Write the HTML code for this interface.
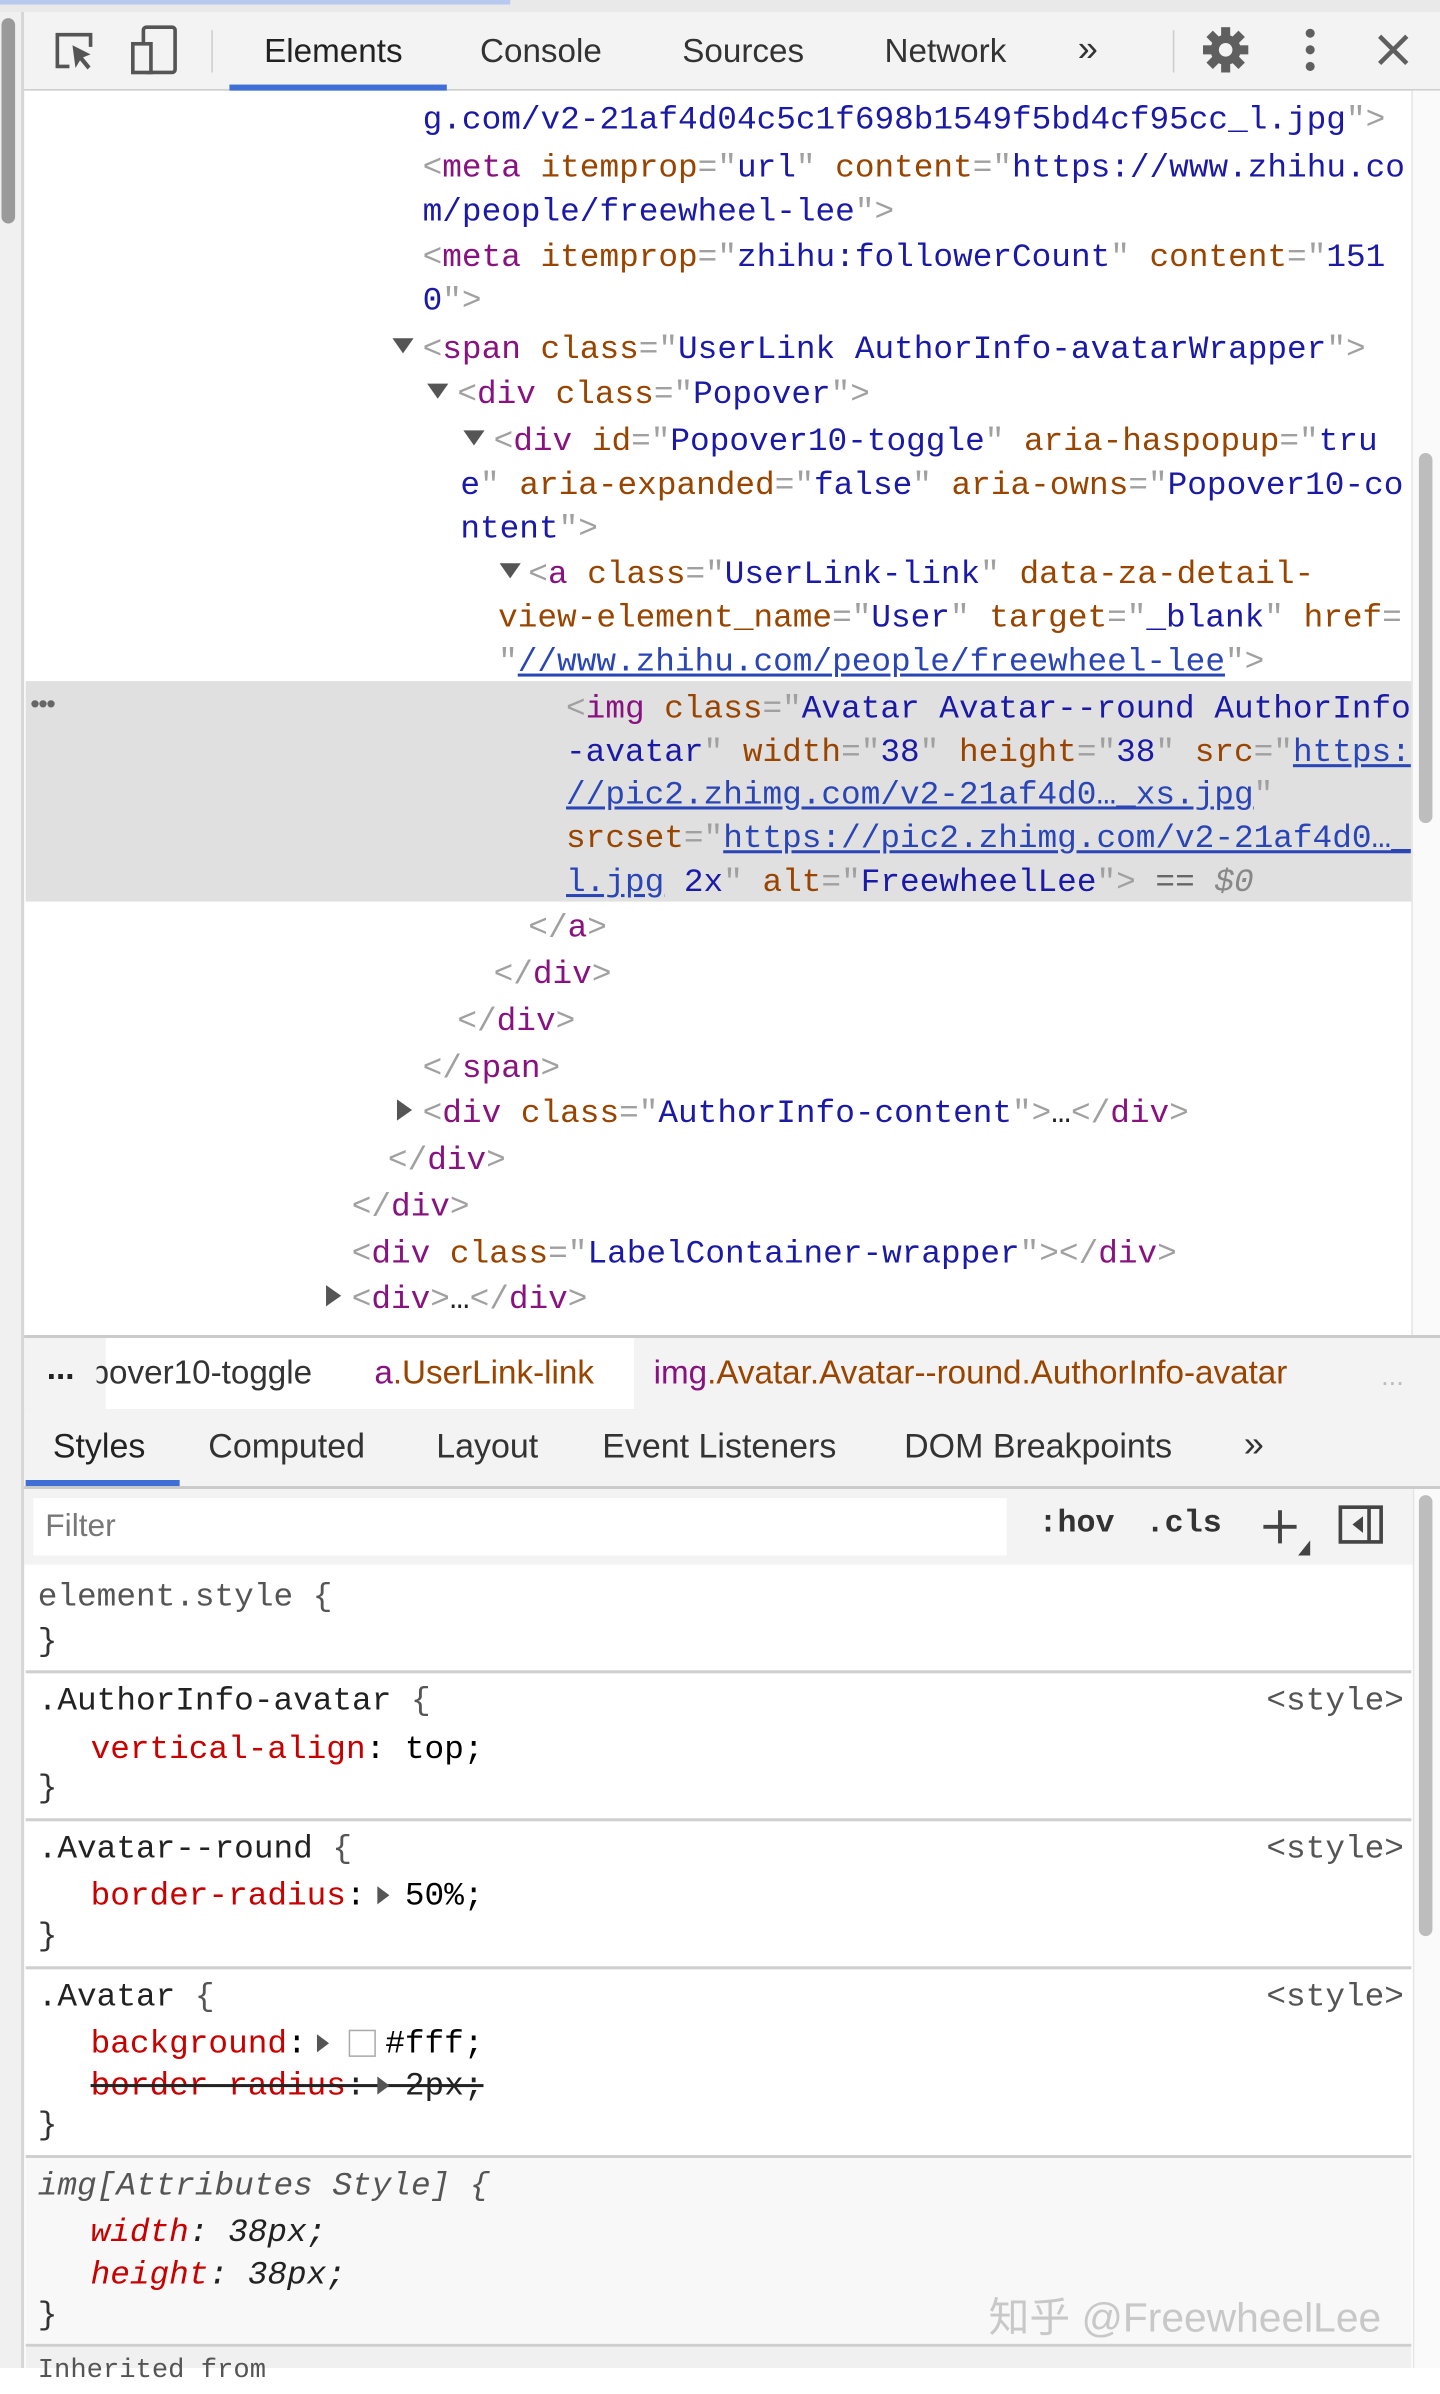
<!DOCTYPE html>
<html><head><meta charset="utf-8">
<style>
html,body{margin:0;padding:0;width:1440px;height:2368px;overflow:hidden;background:#fff}
#s{position:absolute;left:0;top:0;width:954px;height:1568px;transform:scale(1.50943,1.5102);transform-origin:0 0;background:#fff;font-family:"Liberation Sans",sans-serif}
.a{position:absolute}
.m{font-family:"Liberation Mono",monospace;font-size:21.7px;line-height:30px;padding-top:3px;white-space:pre;position:absolute}
.t{color:#881280}.n{color:#994500}.v{color:#1a1aa6}.p{color:#a0a0a0}.k{color:#222}
.u{text-decoration:underline;color:#2a45b5}
.tri{position:absolute;width:0;height:0;border-left:7px solid transparent;border-right:7px solid transparent;border-top:10px solid #555}
.trr{position:absolute;width:0;height:0;border-top:7px solid transparent;border-bottom:7px solid transparent;border-left:10px solid #555}
.tab{position:absolute;font-size:22px;color:#333;top:21px}
.stab{position:absolute;font-size:22.5px;color:#333;top:945px}
.r{color:#c80000}
.sep{position:absolute;left:17px;width:918px;height:2px;background:#cfcfcf}
</style></head><body><div id="s">
<div class="a" style="left:0;top:0;width:954px;height:8px;background:#e9e9e9"></div>
<div class="a" style="left:0;top:0;width:338px;height:3px;background:#b9c8ee"></div>
<div class="a" style="left:0;top:8px;width:14px;height:1560px;background:#f0f0f0;border-right:2px solid #d6d6d6"></div>
<div class="a" style="left:1px;top:12px;width:9px;height:136px;background:#9a9a9a;border-radius:5px"></div>
<div class="a" style="left:16px;top:8px;width:938px;height:51px;background:#f3f3f3;border-bottom:1px solid #cbcbcb"></div>
<svg class="a" style="left:34px;top:18px" width="34" height="32" viewBox="0 0 34 32"><path d="M12 26H4V5h22v8" fill="none" stroke="#555" stroke-width="2.4"/><path d="M14 12l12 6-5 2 5 6-2 2-5-6-3 5z" fill="#555"/></svg>
<svg class="a" style="left:86px;top:16px" width="34" height="34" viewBox="0 0 34 34"><rect x="9" y="2" width="21" height="30" rx="2" fill="none" stroke="#555" stroke-width="2.4"/><rect x="2" y="13" width="12" height="19" fill="#f3f3f3" stroke="#555" stroke-width="2.4"/></svg>
<div class="a" style="left:140px;top:20px;width:1px;height:28px;background:#ccc"></div>
<div class="tab" style="left:175px;color:#222">Elements</div>
<div class="a" style="left:152px;top:56px;width:144px;height:4px;background:#3f6fd6"></div>
<div class="tab" style="left:318px">Console</div>
<div class="tab" style="left:452px">Sources</div>
<div class="tab" style="left:586px">Network</div>
<div class="tab" style="left:714px;font-size:24px;top:19px">»</div>
<div class="a" style="left:777px;top:20px;width:1px;height:28px;background:#ccc"></div>
<svg class="a" style="left:796px;top:17px" width="32" height="32" viewBox="0 0 32 32"><g fill="#5f5f5f"><circle cx="16" cy="16" r="10"/><rect x="13" y="1" width="6" height="30"/><rect x="1" y="13" width="30" height="6"/><rect x="13" y="1" width="6" height="30" transform="rotate(45 16 16)"/><rect x="13" y="1" width="6" height="30" transform="rotate(-45 16 16)"/></g><circle cx="16" cy="16" r="4.5" fill="#f3f3f3"/></svg>
<svg class="a" style="left:862px;top:18px" width="12" height="30"><circle cx="6" cy="4" r="3" fill="#5f5f5f"/><circle cx="6" cy="15" r="3" fill="#5f5f5f"/><circle cx="6" cy="26" r="3" fill="#5f5f5f"/></svg>
<svg class="a" style="left:911px;top:21px" width="24" height="24"><path d="M3 3L21 21M21 3L3 21" stroke="#5f5f5f" stroke-width="3"/></svg>
<div class="a" style="left:935px;top:60px;width:19px;height:825px;background:#fafafa;border-left:1px solid #e5e5e5"></div>
<div class="a" style="left:940px;top:300px;width:9px;height:245px;background:#bdbdbd;border-radius:5px"></div>
<div class="a" style="left:17px;top:451px;width:918px;height:146px;background:#e0e0e0"></div>
<div class="a" style="left:20px;top:456px;font-size:18px;color:#666;letter-spacing:-1px">•••</div>
<div class="m" style="left:280px;top:62px"><span class="v">g.com/v2-21af4d04c5c1f698b1549f5bd4cf95cc_l.jpg</span><span class="p">"&gt;</span></div>
<div class="m" style="left:280px;top:94px"><span class="p">&lt;</span><span class="t">meta</span> <span class="n">itemprop</span><span class="p">="</span><span class="v">url</span><span class="p">"</span> <span class="n">content</span><span class="p">="</span><span class="v">https://www.zhihu.co</span></div>
<div class="m" style="left:280px;top:123px"><span class="v">m/people/freewheel-lee</span><span class="p">"&gt;</span></div>
<div class="m" style="left:280px;top:153px"><span class="p">&lt;</span><span class="t">meta</span> <span class="n">itemprop</span><span class="p">="</span><span class="v">zhihu:followerCount</span><span class="p">"</span> <span class="n">content</span><span class="p">="</span><span class="v">151</span></div>
<div class="m" style="left:280px;top:182px"><span class="v">0</span><span class="p">"&gt;</span></div>
<div class="tri" style="left:260px;top:224px"></div>
<div class="m" style="left:280px;top:214px"><span class="p">&lt;</span><span class="t">span</span> <span class="n">class</span><span class="p">="</span><span class="v">UserLink AuthorInfo-avatarWrapper</span><span class="p">"&gt;</span></div>
<div class="tri" style="left:283px;top:254px"></div>
<div class="m" style="left:303px;top:244px"><span class="p">&lt;</span><span class="t">div</span> <span class="n">class</span><span class="p">="</span><span class="v">Popover</span><span class="p">"&gt;</span></div>
<div class="tri" style="left:307px;top:285px"></div>
<div class="m" style="left:327px;top:275px"><span class="p">&lt;</span><span class="t">div</span> <span class="n">id</span><span class="p">="</span><span class="v">Popover10-toggle</span><span class="p">"</span> <span class="n">aria-haspopup</span><span class="p">="</span><span class="v">tru</span></div>
<div class="m" style="left:305px;top:304px"><span class="v">e</span><span class="p">"</span> <span class="n">aria-expanded</span><span class="p">="</span><span class="v">false</span><span class="p">"</span> <span class="n">aria-owns</span><span class="p">="</span><span class="v">Popover10-co</span></div>
<div class="m" style="left:305px;top:333px"><span class="v">ntent</span><span class="p">"&gt;</span></div>
<div class="tri" style="left:331px;top:373px"></div>
<div class="m" style="left:350px;top:363px"><span class="p">&lt;</span><span class="t">a</span> <span class="n">class</span><span class="p">="</span><span class="v">UserLink-link</span><span class="p">"</span> <span class="n">data-za-detail-</span></div>
<div class="m" style="left:330px;top:392px"><span class="n">view-element_name</span><span class="p">="</span><span class="v">User</span><span class="p">"</span> <span class="n">target</span><span class="p">="</span><span class="v">_blank</span><span class="p">"</span> <span class="n">href</span><span class="p">=</span></div>
<div class="m" style="left:330px;top:421px"><span class="p">"</span><span class="u">//www.zhihu.com/people/freewheel-lee</span><span class="p">"&gt;</span></div>
<div class="m" style="left:375px;top:452px"><span class="p">&lt;</span><span class="t">img</span> <span class="n">class</span><span class="p">="</span><span class="v">Avatar Avatar--round AuthorInfo</span></div>
<div class="m" style="left:375px;top:481px"><span class="v">-avatar</span><span class="p">"</span> <span class="n">width</span><span class="p">="</span><span class="v">38</span><span class="p">"</span> <span class="n">height</span><span class="p">="</span><span class="v">38</span><span class="p">"</span> <span class="n">src</span><span class="p">="</span><span class="u">https:</span></div>
<div class="m" style="left:375px;top:509px"><span class="u">//pic2.zhimg.com/v2-21af4d0…_xs.jpg</span><span class="p">"</span></div>
<div class="m" style="left:375px;top:538px"><span class="n">srcset</span><span class="p">="</span><span class="u">https://pic2.zhimg.com/v2-21af4d0…_</span></div>
<div class="m" style="left:375px;top:567px"><span class="u">l.jpg</span><span class="v"> 2x</span><span class="p">"</span> <span class="n">alt</span><span class="p">="</span><span class="v">FreewheelLee</span><span class="p">"&gt;</span> <span style="color:#666">==</span> <i style="color:#888">$0</i></div>
<div class="m" style="left:350px;top:597px"><span class="p">&lt;/</span><span class="t">a</span><span class="p">&gt;</span></div>
<div class="m" style="left:327px;top:628px"><span class="p">&lt;/</span><span class="t">div</span><span class="p">&gt;</span></div>
<div class="m" style="left:303px;top:659px"><span class="p">&lt;/</span><span class="t">div</span><span class="p">&gt;</span></div>
<div class="m" style="left:280px;top:690px"><span class="p">&lt;/</span><span class="t">span</span><span class="p">&gt;</span></div>
<div class="trr" style="left:263px;top:728px"></div>
<div class="m" style="left:280px;top:720px"><span class="p">&lt;</span><span class="t">div</span> <span class="n">class</span><span class="p">="</span><span class="v">AuthorInfo-content</span><span class="p">"&gt;</span><span class="k">…</span><span class="p">&lt;/</span><span class="t">div</span><span class="p">&gt;</span></div>
<div class="m" style="left:257px;top:751px"><span class="p">&lt;/</span><span class="t">div</span><span class="p">&gt;</span></div>
<div class="m" style="left:233px;top:782px"><span class="p">&lt;/</span><span class="t">div</span><span class="p">&gt;</span></div>
<div class="m" style="left:233px;top:813px"><span class="p">&lt;</span><span class="t">div</span> <span class="n">class</span><span class="p">="</span><span class="v">LabelContainer-wrapper</span><span class="p">"&gt;&lt;/</span><span class="t">div</span><span class="p">&gt;</span></div>
<div class="trr" style="left:216px;top:851px"></div>
<div class="m" style="left:233px;top:843px"><span class="p">&lt;</span><span class="t">div</span><span class="p">&gt;</span><span class="k">…</span><span class="p">&lt;/</span><span class="t">div</span><span class="p">&gt;</span></div>
<div class="a" style="left:16px;top:884px;width:938px;height:47px;background:#f3f3f3;border-top:2px solid #cbcbcb;border-bottom:2px solid #cbcbcb"></div>
<div class="a" style="left:70px;top:886px;width:350px;height:47px;background:#fff"></div>
<div class="a" style="left:31px;top:893px;font-size:22px;font-weight:bold;color:#222">...</div>
<div class="a" style="left:64px;top:896px;font-size:22px;color:#333;width:160px;overflow:hidden;white-space:nowrap"><span style="margin-left:-4px">pover10-toggle</span></div>
<div class="a" style="left:248px;top:896px;font-size:22px;color:#994500;white-space:nowrap"><span class="t">a</span>.UserLink-link</div>
<div class="a" style="left:433px;top:896px;font-size:22px;color:#994500;white-space:nowrap"><span class="t">img</span>.Avatar.Avatar--round.AuthorInfo-avatar</div>
<div class="a" style="left:915px;top:901px;font-size:18px;color:#bbb">...</div>
<div class="a" style="left:16px;top:933px;width:938px;height:51px;background:#f3f3f3;border-bottom:2px solid #cbcbcb"></div>
<div class="stab" style="left:35px;color:#222">Styles</div>
<div class="a" style="left:17px;top:980px;width:102px;height:4px;background:#3f6fd6"></div>
<div class="stab" style="left:138px">Computed</div>
<div class="stab" style="left:289px">Layout</div>
<div class="stab" style="left:399px">Event Listeners</div>
<div class="stab" style="left:599px">DOM Breakpoints</div>
<div class="stab" style="left:824px;font-size:24px;top:943px">»</div>
<div class="a" style="left:16px;top:986px;width:922px;height:50px;background:#f3f3f3"></div>
<div class="a" style="left:22px;top:992px;width:645px;height:38px;background:#fff"></div>
<div class="a" style="left:30px;top:999px;font-size:21px;color:#777">Filter</div>
<div class="a" style="left:688px;top:998px;font-family:'Liberation Mono',monospace;font-size:21px;font-weight:bold;color:#333">:hov</div>
<div class="a" style="left:759px;top:998px;font-family:'Liberation Mono',monospace;font-size:21px;font-weight:bold;color:#333">.cls</div>
<svg class="a" style="left:836px;top:998px" width="36" height="34"><path d="M12 2v22M1 13h22" stroke="#444" stroke-width="2.6"/><path d="M32 22v10h-8z" fill="#444"/></svg>
<svg class="a" style="left:886px;top:996px" width="32" height="28"><rect x="2" y="2" width="27" height="23" fill="none" stroke="#444" stroke-width="2.4"/><path d="M21 2v23" stroke="#444" stroke-width="2.4"/><path d="M17 8v11l-7-5.5z" fill="#444"/></svg>
<div class="a" style="left:936px;top:986px;width:18px;height:582px;background:#fafafa;border-left:1px solid #e5e5e5"></div>
<div class="a" style="left:940px;top:990px;width:9px;height:292px;background:#bdbdbd;border-radius:5px"></div>
<div class="m" style="left:25px;top:1040px;color:#555">element.style {</div>
<div class="m" style="left:25px;top:1070px;color:#333">}</div>
<div class="sep" style="top:1106px"></div>
<div class="m" style="left:25px;top:1109px;color:#222">.AuthorInfo-avatar <span style="color:#555">{</span></div>
<div class="m" style="left:839px;top:1109px;color:#555">&lt;style&gt;</div>
<div class="m" style="left:60px;top:1141px"><span class="r">vertical-align</span>: top;</div>
<div class="m" style="left:25px;top:1167px;color:#333">}</div>
<div class="sep" style="top:1204px"></div>
<div class="m" style="left:25px;top:1207px;color:#222">.Avatar--round <span style="color:#555">{</span></div>
<div class="m" style="left:839px;top:1207px;color:#555">&lt;style&gt;</div>
<div class="m" style="left:60px;top:1238px"><span class="r">border-radius</span>:  50%;</div>
<div class="trr" style="left:250px;top:1249px;border-top-width:6px;border-bottom-width:6px;border-left-width:8px"></div>
<div class="m" style="left:25px;top:1265px;color:#333">}</div>
<div class="sep" style="top:1302px"></div>
<div class="m" style="left:25px;top:1305px;color:#222">.Avatar <span style="color:#555">{</span></div>
<div class="m" style="left:839px;top:1305px;color:#555">&lt;style&gt;</div>
<div class="m" style="left:60px;top:1336px"><span class="r">background</span>:    #fff;</div>
<div class="trr" style="left:210px;top:1347px;border-top-width:6px;border-bottom-width:6px;border-left-width:8px"></div>
<div class="a" style="left:231px;top:1344px;width:16px;height:16px;border:1px solid #aaa;background:#fff"></div>
<div class="m" style="left:60px;top:1364px;text-decoration:line-through;color:#222"><span class="r">border-radius</span>:  2px;</div>
<div class="trr" style="left:250px;top:1375px;border-top-width:6px;border-bottom-width:6px;border-left-width:8px"></div>
<div class="m" style="left:25px;top:1390px;color:#333">}</div>
<div class="sep" style="top:1427px"></div>
<div class="a" style="left:17px;top:1429px;width:918px;height:124px;background:#f8f8f8"></div>
<div class="m" style="left:25px;top:1430px;color:#555;font-style:italic">img[Attributes Style] {</div>
<div class="m" style="left:60px;top:1461px;font-style:italic;color:#222"><span class="r">width</span>: 38px;</div>
<div class="m" style="left:60px;top:1489px;font-style:italic;color:#222"><span class="r">height</span>: 38px;</div>
<div class="m" style="left:25px;top:1516px;color:#333">}</div>
<div class="a" style="left:655px;top:1513px;font-family:'Liberation Sans','Noto Sans CJK SC',sans-serif;font-size:27px;color:#c8c8c8;white-space:nowrap">知乎 @FreewheelLee</div>
<div class="sep" style="top:1552px"></div>
<div class="a" style="left:17px;top:1554px;width:918px;height:14px;background:#f0f0f0"></div>
<div class="m" style="left:25px;top:1552px;color:#555;font-size:18px">Inherited from</div>
</div></body></html>
